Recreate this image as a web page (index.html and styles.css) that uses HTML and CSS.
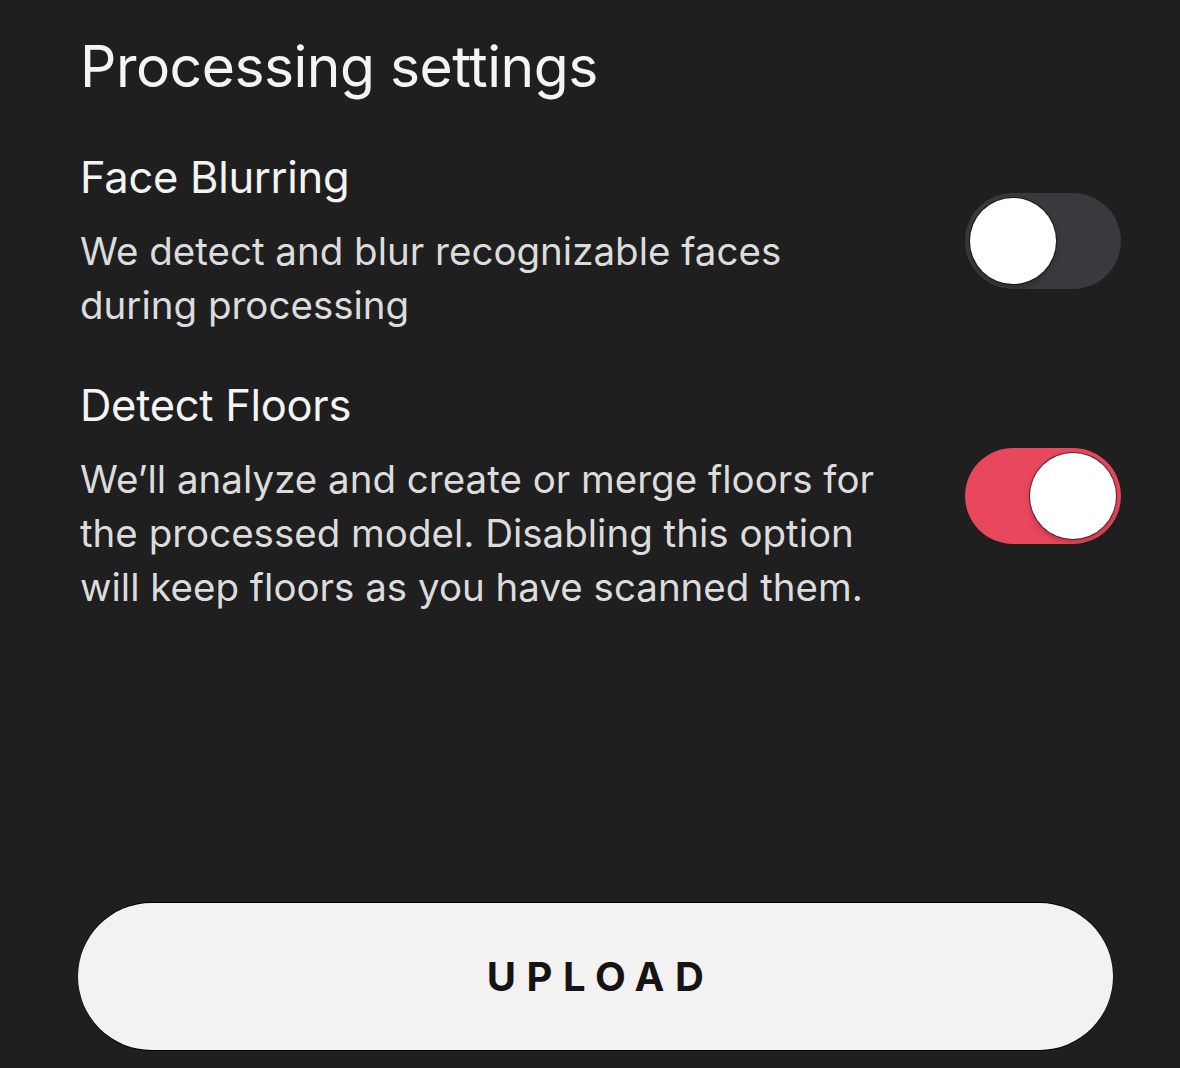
FILE: index.html
```html
<!DOCTYPE html>
<html lang="en">
  <head>
    <meta charset="UTF-8" />
    <meta name="viewport" content="width=device-width, initial-scale=1.0" />
    <title>Processing settings</title>
    <link rel="stylesheet" href="styles.css">
  </head>
  <body>
    <div class="screen">
      <div class="settings">
        <h1 class="title">Processing settings</h1>

        <div class="option">
          <div class="option-text">
            <h2 class="option-name">Face Blurring</h2>
            <p class="option-desc">We detect and blur recognizable faces during processing</p>
          </div>
          <label class="switch">
            <input type="checkbox" />
            <span class="track"><span class="knob"></span></span>
          </label>
        </div>

        <div class="option">
          <div class="option-text">
            <h2 class="option-name">Detect Floors</h2>
            <p class="option-desc">We’ll analyze and create or merge floors for the processed model. Disabling this option will keep floors as you have scanned them.</p>
          </div>
          <label class="switch">
            <input type="checkbox" checked />
            <span class="track"><span class="knob"></span></span>
          </label>
        </div>
      </div>

      <button class="upload" type="button">UPLOAD</button>
    </div>
  </body>
</html>
```

FILE: styles.css
```css
html,
body {
  margin: 0;
  padding: 0;
}
body {
  background-color: #1f1f1f;
  color: #f4f4f4;
  font-family: Inter, "Noto Sans", sans-serif;
}
.screen {
  display: flex;
  flex-direction: column;
  min-height: 1068px;
  box-sizing: border-box;
  padding: 0 59px 18px 80px;
}
.settings {
  display: flex;
  flex-direction: column;
}
.title {
  margin: 29px 0 0;
  font-size: 57px;
  font-weight: 400;
  line-height: 76px;
  letter-spacing: -0.5px;
}
.option {
  display: flex;
  align-items: center;
  justify-content: space-between;
  margin-top: 44px;
}
.option + .option {
  margin-top: 45px;
}
.option-text {
  width: 812px;
}
.option-name {
  margin: 0;
  font-size: 43.5px;
  font-weight: 400;
  line-height: 56px;
  letter-spacing: -0.3px;
}
.option-desc {
  margin: 19px 0 0;
  font-size: 38.5px;
  line-height: 54px;
  color: #dcdcdc;
}

/* toggle switch */
.switch {
  position: relative;
  flex: none;
  cursor: pointer;
}
.switch input {
  position: absolute;
  opacity: 0;
  width: 0;
  height: 0;
}
.track {
  display: flex;
  align-items: center;
  width: 156px;
  height: 96px;
  padding: 0 5px;
  box-sizing: border-box;
  border-radius: 48px;
  background-color: #3a3a3e;
}
.knob {
  width: 86px;
  height: 86px;
  border-radius: 50%;
  background-color: #fff;
  box-shadow: 0 0 0 1px rgba(0, 0, 0, 0.5), 0 3px 6px rgba(0, 0, 0, 0.25);
}
.switch input:checked + .track {
  justify-content: flex-end;
  background-color: #e8485e;
}

.upload {
  margin: auto 8px 0 -2px;
  padding: 0 0 0 10px;
  height: 147px;
  border: none;
  border-radius: 74px;
  background-color: #f3f2f1;
  box-shadow: 0 -1px 0 #000, 0 1px 0 #000;
  color: #141414;
  font-family: Inter, "Noto Sans", sans-serif;
  font-size: 40px;
  font-weight: 700;
  letter-spacing: 10.5px;
  cursor: pointer;
}
```
